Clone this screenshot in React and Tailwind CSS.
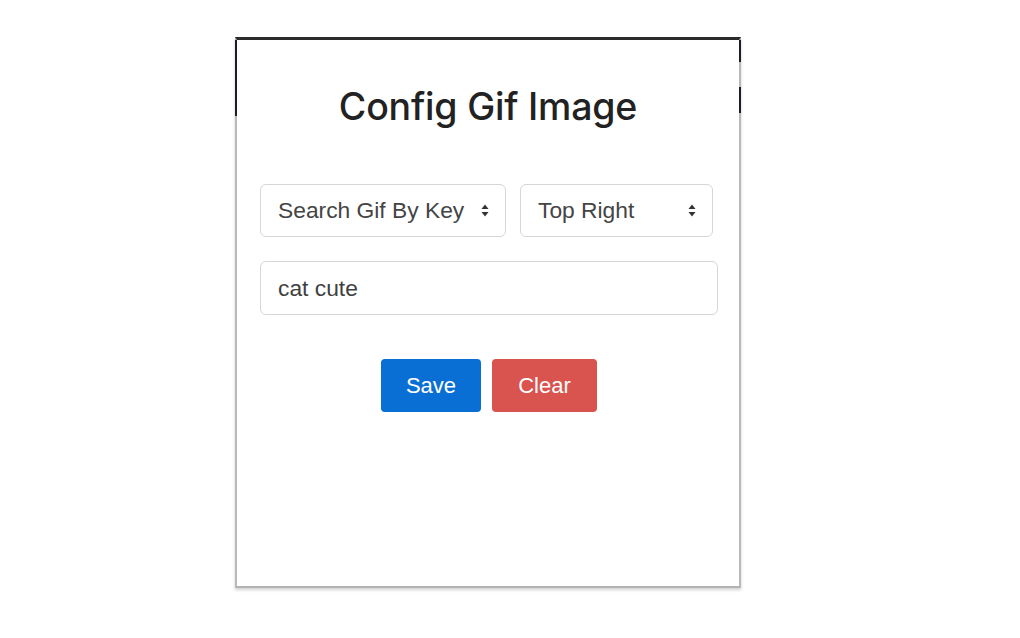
import React, { useState } from 'react';

// petites flèches haut/bas façon select natif
function SelectArrows() {
  return (
    <svg width="8" height="13" viewBox="0 0 8 13" className="shrink-0">
      <path d="M4 0.5 L7.5 5 L0.5 5 Z" fill="#333" />
      <path d="M4 12.5 L7.5 8 L0.5 8 Z" fill="#333" />
    </svg>
  );
}

function FakeSelect({ label, className }) {
  return (
    <div
      className={`flex h-[53px] items-center justify-between rounded-[6px] border border-[#d6d6d6] bg-white pl-[17px] pr-[16px] text-[22.8px] text-[#444] ${className}`}
    >
      <span>{label}</span>
      <SelectArrows />
    </div>
  );
}

export default function App() {
  const [keyword, setKeyword] = useState('cat cute');

  return (
    <div className="h-[638px] w-[1020px] bg-white pl-[235px] pt-[37px]" style={{ fontFamily: '"Liberation Sans", Arial, sans-serif' }}>
      <div className="relative h-[551px] w-[506px] border-x-2 border-b-2 border-t-[3px] border-x-[#b9b9b9] border-b-[#b3b3b3] border-t-[#2b2b2b] bg-white px-[23px] shadow-[0_2px_3px_rgba(0,0,0,0.18)]">
        {/* restes sombres de la fenêtre derrière */}
        <div className="absolute -left-[2px] top-0 h-[76px] w-[2px] bg-[#1c1c24]" />
        <div className="absolute -right-[2px] top-0 h-[22px] w-[2px] bg-[#1c1c24]" />
        <div className="absolute -right-[2px] top-[47px] h-[26px] w-[2px] bg-[#1c1c24]" />

        <h2 className="mt-[48px] text-center text-[37.5px] font-medium leading-[38px] tracking-[-0.2px] text-[#222]" style={{ fontFamily: 'Inter, "Liberation Sans", sans-serif' }}>
          Config Gif Image
        </h2>

        <div className="mt-[58px] flex gap-[14px]">
          <FakeSelect label="Search Gif By Key" className="w-[246px]" />
          <FakeSelect label="Top Right" className="w-[193px]" />
        </div>

        <input
          value={keyword}
          onChange={e => setKeyword(e.target.value)}
          className="mt-[24px] block h-[54px] w-[458px] rounded-[6px] border border-[#d6d6d6] px-[17px] text-[22.8px] text-[#3f3f3f] outline-none"
        />

        <div className="mt-[44px] flex justify-center gap-[11px] pl-[2px]">
          <button className="h-[53px] w-[100px] rounded-[4px] bg-[#0a6fd4] text-[22px] text-white">Save</button>
          <button className="h-[53px] w-[105px] rounded-[4px] bg-[#d9534f] text-[22px] text-white" onClick={() => setKeyword('')}>Clear</button>
        </div>
      </div>
    </div>
  );
}
